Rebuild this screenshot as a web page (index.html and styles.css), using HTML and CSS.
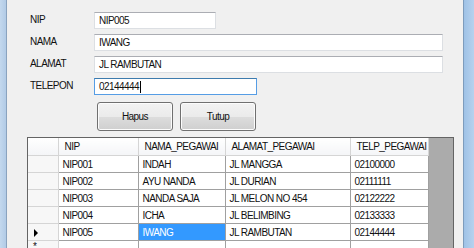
FILE: index.html
```html
<!DOCTYPE html>
<html>
<head>
<meta charset="utf-8">
<link rel="stylesheet" href="styles.css">
</head>
<body>
<div class="window">
  <div class="frame-left"></div>
  <div class="content">
    <div class="form">
      <div class="field">
        <span class="label">NIP</span>
        <div class="textbox w-nip">NIP005</div>
      </div>
      <div class="field">
        <span class="label">NAMA</span>
        <div class="textbox w-long">IWANG</div>
      </div>
      <div class="field">
        <span class="label">ALAMAT</span>
        <div class="textbox w-long">JL RAMBUTAN</div>
      </div>
      <div class="field">
        <span class="label">TELEPON</span>
        <div class="textbox w-tel focused">02144444<span class="caret"></span></div>
      </div>
    </div>
    <div class="buttons">
      <div class="button">Hapus</div>
      <div class="button">Tutup</div>
    </div>
    <div class="grid">
      <table class="table">
        <colgroup>
          <col class="c-rh"><col class="c-nip"><col class="c-nama"><col class="c-alamat"><col class="c-telp">
        </colgroup>
        <thead>
          <tr>
            <th class="rowhead"></th>
            <th>NIP</th>
            <th>NAMA_PEGAWAI</th>
            <th>ALAMAT_PEGAWAI</th>
            <th>TELP_PEGAWAI</th>
          </tr>
        </thead>
        <tbody>
          <tr><td class="rowhead"></td><td>NIP001</td><td>INDAH</td><td>JL MANGGA</td><td>02100000</td></tr>
          <tr><td class="rowhead"></td><td>NIP002</td><td>AYU NANDA</td><td>JL DURIAN</td><td>02111111</td></tr>
          <tr><td class="rowhead"></td><td>NIP003</td><td>NANDA SAJA</td><td>JL MELON NO 454</td><td>02122222</td></tr>
          <tr><td class="rowhead"></td><td>NIP004</td><td>ICHA</td><td>JL BELIMBING</td><td>02133333</td></tr>
          <tr><td class="rowhead"><span class="arrow"></span></td><td>NIP005</td><td class="selected">IWANG</td><td>JL RAMBUTAN</td><td>02144444</td></tr>
          <tr><td class="rowhead"><span class="star">*</span></td><td></td><td></td><td></td><td></td></tr>
        </tbody>
      </table>
    </div>
  </div>
  <div class="frame-right"></div>
</div>
</body>
</html>
```
FILE: styles.css
```css
html, body {
  margin: 0;
  padding: 0;
  width: 474px;
  height: 248px;
  overflow: hidden;
  background: #f0f0f0;
  font-family: "Liberation Sans", Arial, sans-serif;
  font-size: 10px;
  letter-spacing: -0.55px;
  color: #111;
}

.window {
  display: flex;
  width: 474px;
  height: 248px;
}

.frame-left {
  width: 6px;
  flex: none;
  background: linear-gradient(to right, #c3d8ee, #b2cbe6);
  border-right: 1px solid #8aa3bf;
}

.frame-right {
  width: 10px;
  flex: none;
  background: linear-gradient(to right, #9fc2e6, #b7d2ee);
  border-left: 1px solid #7e9cbc;
}

.content {
  flex: 1;
  display: flex;
  flex-direction: column;
  min-width: 0;
}

.form {
  display: flex;
  flex-direction: column;
  gap: 5px;
  padding: 12px 0 0 23px;
}

.field {
  display: flex;
  align-items: flex-start;
}

.label {
  width: 64px;
  flex: none;
  line-height: 14px;
  padding-top: 1px;
}

.textbox {
  box-sizing: border-box;
  height: 17px;
  background: #fff;
  border: 1px solid #dcdfe3;
  border-top-color: #abadb3;
  padding: 0 4px;
  line-height: 15px;
  display: flex;
  align-items: center;
}

.w-nip { width: 122px; }
.w-long { width: 349px; }
.w-tel { width: 163px; }

.textbox.focused {
  border: 1px solid #569de5;
  border-top-color: #3d7bad;
}

.caret {
  display: inline-block;
  width: 1px;
  height: 12px;
  background: #000;
  margin-left: 1px;
}

.buttons {
  display: flex;
  gap: 7px;
  padding-left: 90px;
  margin-top: 7px;
}

.button {
  box-sizing: border-box;
  width: 76px;
  height: 29px;
  border: 1px solid #707070;
  border-radius: 3px;
  background: linear-gradient(to bottom, #f2f2f2 0%, #ebebeb 50%, #dddddd 51%, #cfcfcf 100%);
  box-shadow: inset 0 0 0 1px #fcfcfc;
  display: flex;
  align-items: center;
  justify-content: center;
}

.grid {
  margin: 6px 9px 0 20px;
  flex: 1;
  background: #ababab;
  border: 1px solid #646464;
  border-bottom: none;
  overflow: hidden;
}

.table {
  border-collapse: collapse;
  table-layout: fixed;
  width: 400px;
  background: #fff;
}

.c-rh { width: 30px; }
.c-nip { width: 80px; }
.c-nama { width: 87px; }
.c-alamat { width: 125px; }
.c-telp { width: 78px; }

.table th {
  height: 17px;
  padding: 0 0 0 6px;
  font-weight: normal;
  text-align: left;
  background: linear-gradient(to bottom, #ffffff, #f4f5f7);
  border-right: 1px solid #d5d5d5;
  border-bottom: 1px solid #d5d5d5;
  white-space: nowrap;
  overflow: hidden;
}

.table th.rowhead {
  padding: 0;
}

.table td {
  height: 16px;
  padding: 0 0 0 4px;
  border: 1px solid #a0a0a0;
  border-top: none;
  border-left: none;
  white-space: nowrap;
  overflow: hidden;
}

.table td.rowhead {
  padding: 0;
  background: #f7f7f7;
  border-right: 1px solid #d5d5d5;
  border-bottom: 1px solid #d5d5d5;
  position: relative;
}

.table td.selected {
  background: #3399ff;
  color: #fff;
}

.arrow {
  position: absolute;
  left: 6px;
  top: 5px;
  width: 0;
  height: 0;
  border-top: 4px solid transparent;
  border-bottom: 4px solid transparent;
  border-left: 4px solid #000;
}

.star {
  position: absolute;
  left: 5px;
  top: 0;
}
```
